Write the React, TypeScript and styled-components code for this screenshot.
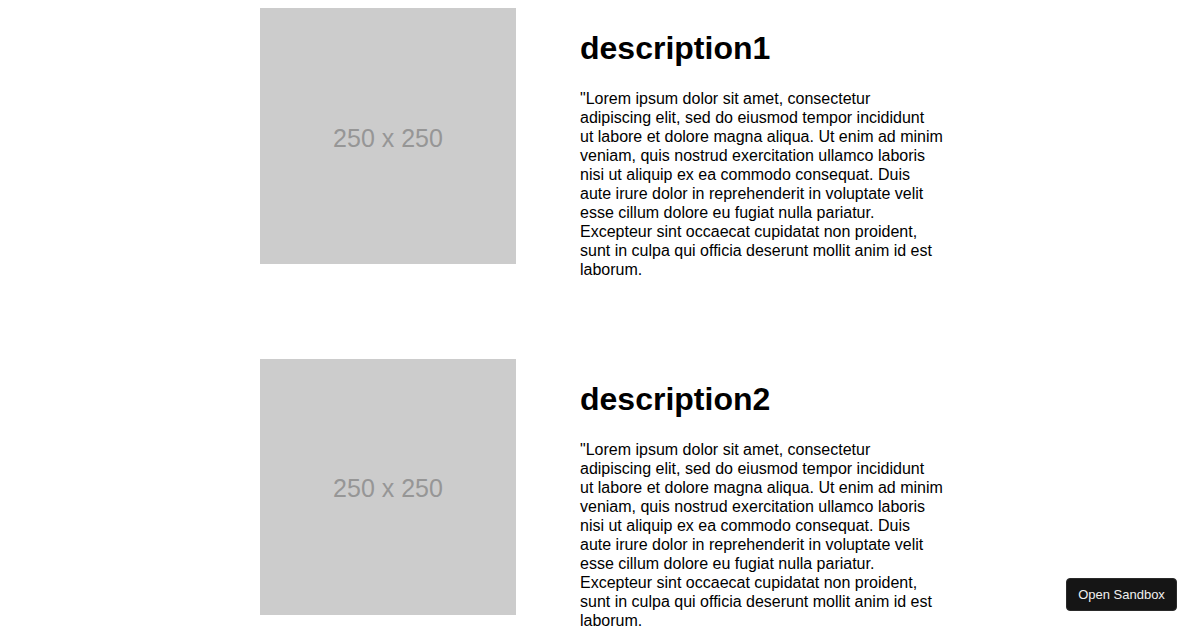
import React from 'react';
import styled, { createGlobalStyle } from 'styled-components';

const GlobalStyle = createGlobalStyle`
  body {
    margin: 8px;
    font-family: "Liberation Sans", Arial, sans-serif;
    color: #000;
    background: #fff;
  }
`;

// wrapped the way the original's font breaks it
const lorem = [
  '"Lorem ipsum dolor sit amet, consectetur',
  'adipiscing elit, sed do eiusmod tempor incididunt',
  'ut labore et dolore magna aliqua. Ut enim ad minim',
  'veniam, quis nostrud exercitation ullamco laboris',
  'nisi ut aliquip ex ea commodo consequat. Duis',
  'aute irure dolor in reprehenderit in voluptate velit',
  'esse cillum dolore eu fugiat nulla pariatur.',
  'Excepteur sint occaecat cupidatat non proident,',
  'sunt in culpa qui officia deserunt mollit anim id est',
  'laborum.',
].join('\n');

const items = [
  { id: 1, title: 'description1' },
  { id: 2, title: 'description2' },
];

const App: React.FC = () => {
  return (
    <>
      <GlobalStyle />
      <List>
        {items.map(item => (
          <Row key={item.id}>
            <Placeholder>250 x 250</Placeholder>
            <TextColumn>
              <Title>{item.title}</Title>
              <Body>{lorem}</Body>
            </TextColumn>
          </Row>
        ))}
      </List>
      <SandboxButton>Open Sandbox</SandboxButton>
    </>
  );
};

const List = styled.div`
  display: flex;
  flex-direction: column;
  align-items: center;
  gap: 64px;
`;

const Row = styled.div`
  display: flex;
  align-items: flex-start;
  gap: 64px;
  width: 680px;
`;

const Placeholder = styled.div`
  flex: 0 0 256px;
  height: 256px;
  box-sizing: border-box;
  padding-top: 4px;
  background: #cccccc;
  color: #969696;
  font-size: 25px;
  display: flex;
  align-items: center;
  justify-content: center;
`;

const TextColumn = styled.div`
  flex: 0 0 370px;
`;

const Title = styled.h1`
  font-size: 32px;
  font-weight: bold;
  margin: 22.44px 0 21.44px;
`;

const Body = styled.p`
  font-size: 16px;
  line-height: 19px;
  margin: 16px 0;
  white-space: pre-line;
`;

const SandboxButton = styled.button`
  position: fixed;
  right: 23px;
  bottom: 19px;
  width: 111px;
  height: 33px;
  background: #151515;
  color: #f0f0f0;
  border: 1px solid #2a2a2a;
  border-radius: 4px;
  font-family: "Liberation Sans", Arial, sans-serif;
  font-size: 13px;
  cursor: pointer;
`;

export default App;
